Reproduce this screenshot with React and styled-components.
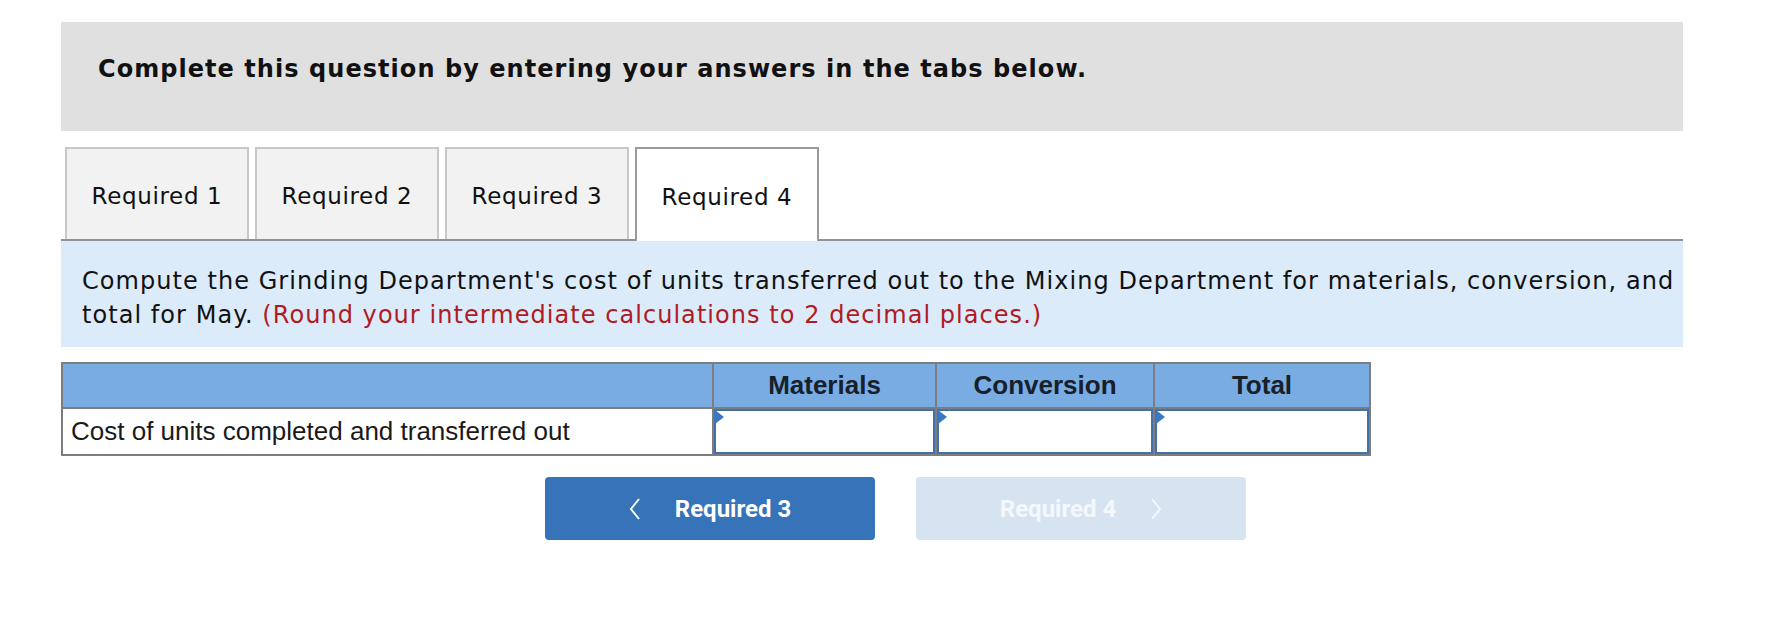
import styled, { createGlobalStyle } from "styled-components";

const GlobalStyle = createGlobalStyle`
  body {
    margin: 0;
    background: #ffffff;
  }
`;

const Page = styled.div`
  width: 1622px;
  padding: 22px 0 40px 61px;
  font-family: "DejaVu Sans", Verdana, sans-serif;
  color: #111;
`;

const Banner = styled.div`
  background: #e0e0e0;
  height: 109px;
  box-sizing: border-box;
  padding: 33px 37px 0;
  font-weight: 700;
  font-size: 24px;
  letter-spacing: 1.05px;
  line-height: 28px;
`;

const TabList = styled.div`
  display: flex;
  gap: 6px;
  margin-top: 16px;
  padding-left: 4px;
  border-bottom: 2px solid #8c939b;
`;

// Props:
// - $active: Boolean - white tab joined to the panel below
const Tab = styled.div`
  width: 184px;
  height: ${(p) => (p.$active ? "94px" : "92px")};
  margin-bottom: ${(p) => (p.$active ? "-2px" : "0")};
  box-sizing: border-box;
  display: flex;
  align-items: center;
  justify-content: center;
  border: 2px solid ${(p) => (p.$active ? "#9a9a9a" : "#c8c8c8")};
  border-bottom: none;
  background: ${(p) => (p.$active ? "#ffffff" : "#f2f2f2")};
  font-size: 23px;
  letter-spacing: 0.65px;
  padding-top: ${(p) => (p.$active ? "4px" : "3px")};
`;

const Prompt = styled.div`
  background: #dcebf9;
  padding: 23px 21px 15px;
  font-size: 24px;
  letter-spacing: 1.05px;
  line-height: 34px;
  white-space: nowrap;
`;

const Hint = styled.span`
  color: #b01a22;
`;

const Grid = styled.table`
  margin-top: 15px;
  border-collapse: collapse;
  border: 2px solid #7b7d80;
  font-family: "Liberation Sans", Arial, sans-serif;
`;

// Props:
// - $w: Number - column width in px
const HeadCell = styled.th`
  width: ${(p) => p.$w}px;
  height: 43px;
  padding: 0;
  background: #79ace3;
  border: 2px solid #7b7d80;
  font-size: 26px;
  font-weight: 700;
  color: #17202b;
  text-align: center;
`;

const LabelCell = styled.td`
  height: 45px;
  padding: 0 8px;
  border: 2px solid #7b7d80;
  font-size: 26px;
  color: #1a1a1a;
  text-align: left;
`;

const InputCell = styled.td`
  padding: 0;
  height: 45px;
  border: 2px solid #7b7d80;
`;

const InputBox = styled.div`
  position: relative;
  height: 45px;
  box-sizing: border-box;
  border: 2px solid #4470aa;
  background: #fff;

  &::before {
    content: "";
    position: absolute;
    left: -1px;
    top: -1px;
    border-style: solid;
    border-width: 7px 0 7px 9px;
    border-color: transparent transparent transparent #3a78c2;
  }
`;

const NavRow = styled.div`
  display: flex;
  gap: 41px;
  margin-top: 21px;
  padding-left: 484px;
`;

// Props:
// - $disabled: Boolean - pale, inactive look
const NavButton = styled.button`
  width: 330px;
  height: 63px;
  border: none;
  border-radius: 4px;
  display: flex;
  align-items: center;
  justify-content: center;
  gap: 34px;
  background: ${(p) => (p.$disabled ? "#d6e3f0" : "#3673b8")};
  color: ${(p) => (p.$disabled ? "#f4f8fc" : "#ffffff")};
  font-family: Roboto, "Liberation Sans", sans-serif;
  font-weight: 700;
  font-size: 24px;
  cursor: ${(p) => (p.$disabled ? "default" : "pointer")};
`;

function Chevron({ dir }) {
  const pts = dir === "left" ? "10,1 2,11 10,21" : "2,1 10,11 2,21";
  return (
    <svg width="12" height="22" viewBox="0 0 12 22">
      <polyline points={pts} fill="none" stroke="currentColor" strokeWidth="2" />
    </svg>
  );
}

const tabs = ["Required 1", "Required 2", "Required 3", "Required 4"];

export default function App() {
  return (
    <Page>
      <GlobalStyle />
      <Banner>Complete this question by entering your answers in the tabs below.</Banner>

      <TabList>
        {tabs.map((t, i) => (
          <Tab key={t} $active={i === 3}>
            {t}
          </Tab>
        ))}
      </TabList>

      <Prompt>
        Compute the Grinding Department's cost of units transferred out to the Mixing Department for materials, conversion, and
        <br />
        total for May. <Hint>(Round your intermediate calculations to 2 decimal places.)</Hint>
      </Prompt>

      <Grid>
        <thead>
          <tr>
            <HeadCell $w={649} />
            <HeadCell $w={221}>Materials</HeadCell>
            <HeadCell $w={216}>Conversion</HeadCell>
            <HeadCell $w={214}>Total</HeadCell>
          </tr>
        </thead>
        <tbody>
          <tr>
            <LabelCell>Cost of units completed and transferred out</LabelCell>
            <InputCell>
              <InputBox />
            </InputCell>
            <InputCell>
              <InputBox />
            </InputCell>
            <InputCell>
              <InputBox />
            </InputCell>
          </tr>
        </tbody>
      </Grid>

      <NavRow>
        <NavButton>
          <Chevron dir="left" />
          Required 3
        </NavButton>
        <NavButton $disabled>
          Required 4
          <Chevron dir="right" />
        </NavButton>
      </NavRow>
    </Page>
  );
}
